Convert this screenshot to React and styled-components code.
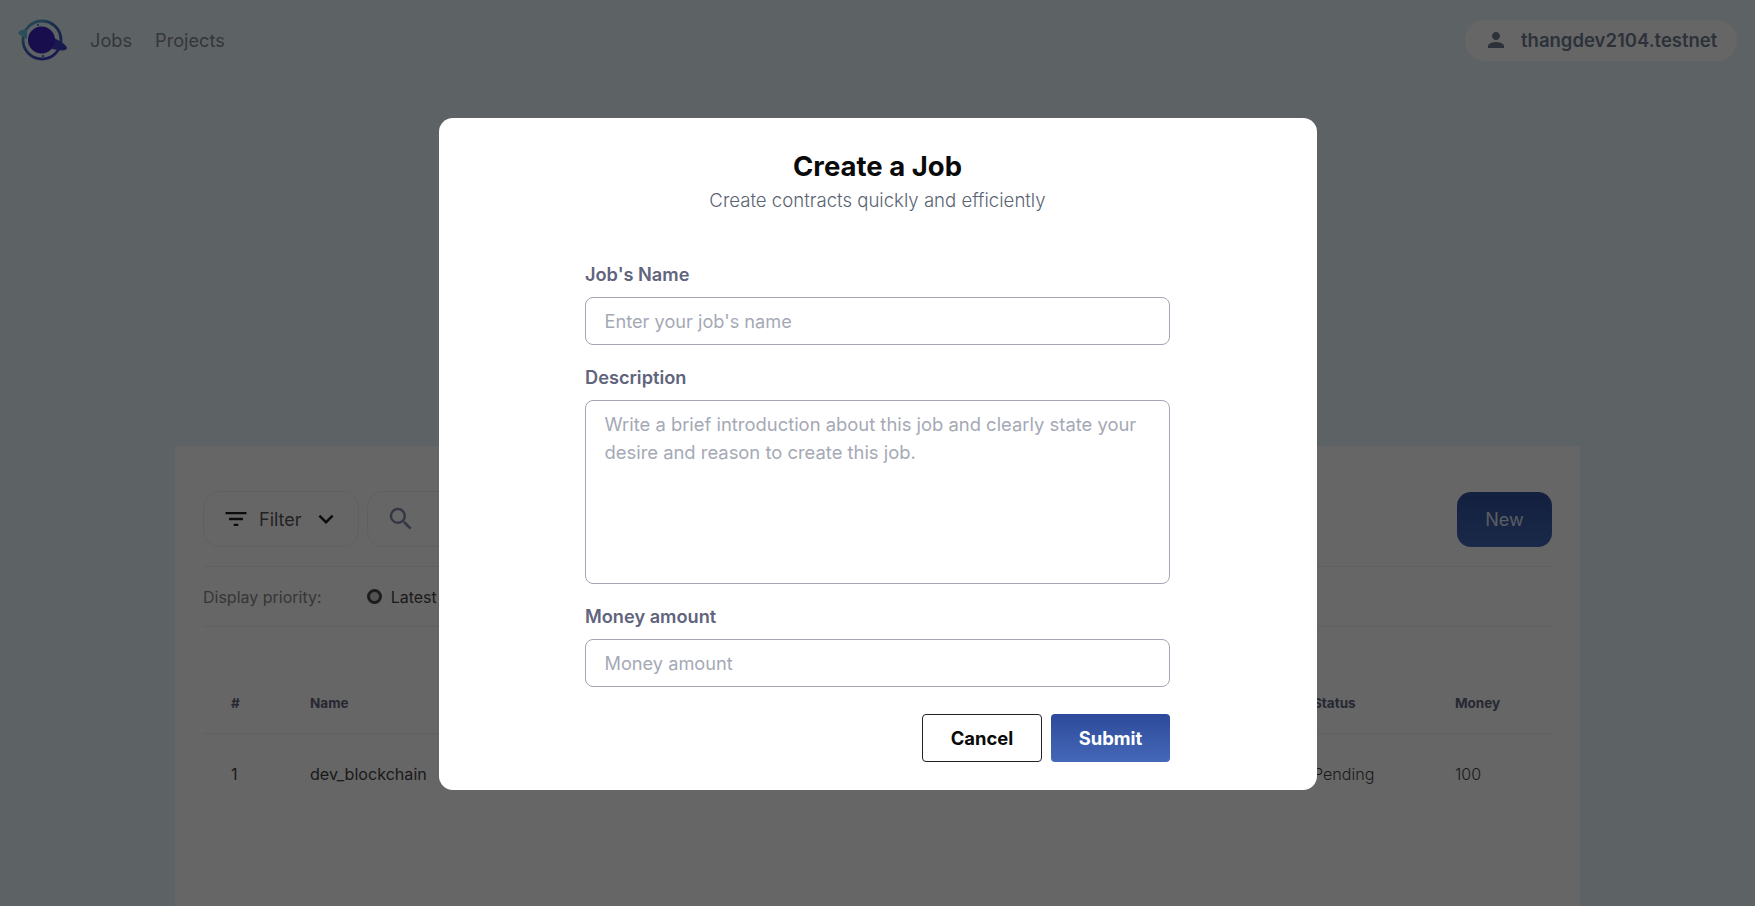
import React from 'react';
import styled, { createGlobalStyle } from 'styled-components';
import { MdPerson, MdFilterList, MdSearch, MdKeyboardArrowDown } from 'react-icons/md';

const GlobalStyle = createGlobalStyle`
  html, body {
    margin: 0;
    padding: 0;
    height: 100%;
    overflow: hidden;
  }

  * {
    box-sizing: border-box;
  }

  body {
    font-family: Inter, "Liberation Sans", sans-serif;
    background: #e8f6fd;
  }
`;

const Page = styled.div`
  display: flex;
  flex-direction: column;
  height: 906px;
  overflow: hidden;
`;

const Header = styled.header`
  display: flex;
  align-items: center;
  justify-content: space-between;
  height: 80px;
  padding: 0 18px 0 17px;
  flex-shrink: 0;
`;

const Nav = styled.nav`
  display: flex;
  align-items: center;
  gap: 23px;
  font-size: 18.2px;
  color: #85888f;
`;

const Logo = styled.svg`
  width: 50px;
  height: 46px;
`;

const NavLink = styled.a`
  color: inherit;
  text-decoration: none;
`;

const UserPill = styled.div`
  display: flex;
  align-items: center;
  gap: 13px;
  width: 272px;
  height: 41px;
  padding-left: 19px;
  background: #ffffff;
  border-radius: 21px;
  font-size: 18.5px;
  font-weight: 600;
  color: #6f7c92;
  svg {
    font-size: 24px;
  }
`;

const Card = styled.main`
  flex: 1;
  margin: 366px 175px 0 175px;
  padding: 45px 28px 0 28px;
  background: #ffffff;
  border-radius: 4px 4px 0 0;
`;

const Toolbar = styled.div`
  display: flex;
  align-items: flex-start;
  gap: 8px;
  height: 76px;
  border-bottom: 1px solid #f0f0f0;
`;

const FilterButton = styled.button`
  display: flex;
  align-items: center;
  width: 156px;
  height: 56px;
  padding: 0 0 0 18px;
  background: #fff;
  border: 1px solid #f0f0f0;
  border-radius: 16px;
  font: 400 18px Inter, sans-serif;
  color: #555;
  svg {
    color: #222;
    flex-shrink: 0;
  }
`;

const FilterLabel = styled.span`
  margin: 0 9px;
`;

const SearchBox = styled.div`
  display: flex;
  align-items: center;
  width: 500px;
  height: 56px;
  padding-left: 18px;
  border: 1px solid #f0f0f0;
  border-radius: 16px;
  color: #7f8aa5;
  font-size: 30px;
`;

const NewButton = styled.button`
  width: 95px;
  height: 55px;
  margin: 1px 0 0 auto;
  background: linear-gradient(180deg, #2f4f9e, #4568b8);
  border: none;
  border-radius: 14px;
  font: 400 18px Inter, sans-serif;
  color: rgba(255, 255, 255, 0.85);
`;

const PriorityRow = styled.div`
  display: flex;
  align-items: center;
  height: 60px;
  border-bottom: 1px solid #f0f0f0;
  font-size: 16px;
  color: #888;
`;

const Radio = styled.span`
  width: 15px;
  height: 15px;
  margin: 0 9px 0 45px;
  border-radius: 50%;
  border: 3px solid #4a4a4a;
  background: #d0d0d0;
`;

const RadioLabel = styled.span`
  color: #444;
`;

const TableWrap = styled.div`
  margin-top: 46px;
`;

const TableRow = styled.div`
  display: grid;
  grid-template-columns: 79px 1fr 142px 97px;
  align-items: center;
  height: ${p => p.$height}px;
  padding-left: 28px;
  border-bottom: ${p => (p.$head ? '1px solid #f0f0f0' : 'none')};
  font-size: ${p => (p.$head ? 13.5 : 16.1)}px;
  font-weight: ${p => (p.$head ? 700 : 400)};
  color: ${p => (p.$head ? '#60647e' : '#444')};
`;

const LightCell = styled.span`
  font-weight: 300;
`;

const Overlay = styled.div`
  position: fixed;
  inset: 0;
  display: flex;
  align-items: center;
  justify-content: center;
  padding: 2px 0 0 1px;
  background: rgba(0, 0, 0, 0.6);
`;

const Modal = styled.form`
  display: flex;
  flex-direction: column;
  width: 878px;
  height: 672px;
  padding: 31px 147px 0 146px;
  background: #ffffff;
  border-radius: 14px;
`;

const Title = styled.h2`
  margin: 0;
  font-size: 27.5px;
  line-height: 34px;
  font-weight: 700;
  text-align: center;
  color: #0a0a0a;
`;

const Subtitle = styled.p`
  margin: 0 0 45px;
  font-size: 18.6px;
  line-height: 34px;
  font-weight: 300;
  text-align: center;
  color: #5a6472;
`;

const Label = styled.label`
  display: block;
  margin-bottom: 11px;
  font-size: 18.2px;
  line-height: 24px;
  font-weight: 600;
  color: #60647c;
`;

const Field = styled.div`
  margin-bottom: ${p => p.$gap}px;
`;

const TextInput = styled.input`
  display: block;
  width: 100%;
  height: 48px;
  padding: 0 18.5px;
  background: #fff;
  border: 1.5px solid #a3a7b5;
  border-radius: 8px;
  font: 400 18.2px Inter, sans-serif;
  &::placeholder {
    color: #a5a9b6;
    opacity: 1;
  }
`;

const TextArea = styled.textarea`
  display: block;
  width: 100%;
  height: 184px;
  padding: 9px 18.5px;
  background: #fff;
  border: 1.5px solid #a3a7b5;
  border-radius: 8px;
  font: 400 18.4px/28px Inter, sans-serif;
  resize: none;
  &::placeholder {
    color: #a5a9b6;
    opacity: 1;
  }
`;

const Actions = styled.div`
  display: flex;
  justify-content: flex-end;
  gap: 9px;
  margin-top: 27px;
`;

const ActionButton = styled.button`
  width: ${p => (p.$primary ? 119 : 120)}px;
  height: 48px;
  border-radius: 4px;
  font: 700 18.4px Inter, sans-serif;
  border: ${p => (p.$primary ? 'none' : '1.5px solid #222')};
  color: ${p => (p.$primary ? '#fff' : '#0a0a0a')};
  background: ${p => (p.$primary ? 'linear-gradient(180deg, #2d4a9a, #4568b8)' : '#fff')};
`;

const PlanetLogo = () => (
  <Logo viewBox="0 0 50 46">
    <defs>
      <linearGradient id="ring" x1="0" y1="0" x2="0.7" y2="1">
        <stop offset="0" stopColor="#68c8e0" />
        <stop offset="0.5" stopColor="#3f68b8" />
        <stop offset="1" stopColor="#4040c8" />
      </linearGradient>
    </defs>
    <circle cx="25" cy="23" r="19" fill="none" stroke="url(#ring)" strokeWidth="2.8" />
    <path d="M1 16 C2 13 6 12 10 13 L10 22 C6 20 2 18 1 16 Z" fill="#68c8e0" />
    <path d="M37 21 C44 24 49 28 50 31 C50 34 44 34 35 32 C37 28 37 24 37 21 Z" fill="#4040c8" />
    <circle cx="24.5" cy="23" r="13.5" fill="#3d22c0" />
    <circle cx="21" cy="8" r="1" fill="#3f68b8" />
    <circle cx="26" cy="39" r="1" fill="#4040c8" />
  </Logo>
);

export default function App() {
  return (
    <>
      <GlobalStyle />
      <Page>
        <Header>
          <Nav>
            <PlanetLogo />
            <NavLink>Jobs</NavLink>
            <NavLink>Projects</NavLink>
          </Nav>
          <UserPill>
            <MdPerson />
            thangdev2104.testnet
          </UserPill>
        </Header>
        <Card>
          <Toolbar>
            <FilterButton type="button">
              <MdFilterList size={28} />
              <FilterLabel>Filter</FilterLabel>
              <MdKeyboardArrowDown size={30} />
            </FilterButton>
            <SearchBox>
              <MdSearch />
            </SearchBox>
            <NewButton type="button">New</NewButton>
          </Toolbar>
          <PriorityRow>
            Display priority:
            <Radio />
            <RadioLabel>Latest</RadioLabel>
          </PriorityRow>
          <TableWrap>
            <TableRow $head $height={61}>
              <span>#</span>
              <span>Name</span>
              <span>Status</span>
              <span>Money</span>
            </TableRow>
            <TableRow $height={80}>
              <span>1</span>
              <span>dev_blockchain</span>
              <LightCell>Pending</LightCell>
              <LightCell>100</LightCell>
            </TableRow>
          </TableWrap>
        </Card>
      </Page>
      <Overlay>
        <Modal>
          <Title>Create a Job</Title>
          <Subtitle>Create contracts quickly and efficiently</Subtitle>
          <Field $gap={20}>
            <Label>Job's Name</Label>
            <TextInput placeholder="Enter your job's name" />
          </Field>
          <Field $gap={20}>
            <Label>Description</Label>
            <TextArea placeholder="Write a brief introduction about this job and clearly state your desire and reason to create this job." />
          </Field>
          <Field $gap={0}>
            <Label>Money amount</Label>
            <TextInput placeholder="Money amount" />
          </Field>
          <Actions>
            <ActionButton type="button">Cancel</ActionButton>
            <ActionButton type="button" $primary>Submit</ActionButton>
          </Actions>
        </Modal>
      </Overlay>
    </>
  );
}
